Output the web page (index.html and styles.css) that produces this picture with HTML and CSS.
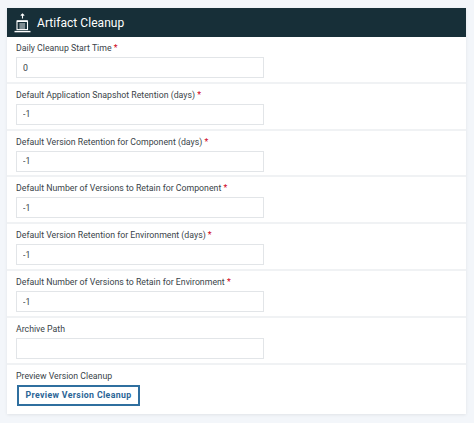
FILE: index.html
```html
<!DOCTYPE html>
<html lang="en">
<head>
    <meta charset="UTF-8">
    <title>Artifact Cleanup</title>
    <link rel="stylesheet" href="styles.css">
</head>
<body>
    <div class="panel">
        <div class="panel-header">
            <svg class="panel-icon" width="17" height="20" viewBox="0 0 17 20" fill="none" stroke="#ffffff" stroke-width="1.1">
                <path d="M8.5 1V5.5M6.8 2.7L8.5 1L10.2 2.7" />
                <rect x="3" y="8" width="10.5" height="8.6" />
                <path d="M3 8.2H13.5" stroke-width="1.6" />
                <path d="M5.4 11H11.1M5.4 13H11.1M5.4 15H11.1" stroke-width="0.9" />
                <path d="M0.5 18.6H16.5" stroke-width="1.4" />
            </svg>
            <span>Artifact Cleanup</span>
        </div>

        <div class="field">
            <label>Daily Cleanup Start Time <span class="req">*</span></label>
            <input type="text" value="0">
        </div>
        <div class="field">
            <label>Default Application Snapshot Retention (days) <span class="req">*</span></label>
            <input type="text" value="-1">
        </div>
        <div class="field">
            <label>Default Version Retention for Component (days) <span class="req">*</span></label>
            <input type="text" value="-1">
        </div>
        <div class="field">
            <label>Default Number of Versions to Retain for Component <span class="req">*</span></label>
            <input type="text" value="-1">
        </div>
        <div class="field">
            <label>Default Version Retention for Environment (days) <span class="req">*</span></label>
            <input type="text" value="-1">
        </div>
        <div class="field">
            <label>Default Number of Versions to Retain for Environment <span class="req">*</span></label>
            <input type="text" value="-1">
        </div>
        <div class="field">
            <label>Archive Path</label>
            <input type="text" value="">
        </div>
        <div class="field field-last">
            <label>Preview Version Cleanup</label>
            <button type="button">Preview Version Cleanup</button>
        </div>
    </div>
</body>
</html>
```

FILE: styles.css
```css
body {
    margin: 0;
    padding: 8px 8px 8px 7px;
    background: #f3f6fa;
    font-family: Roboto, 'Liberation Sans', sans-serif;
    font-size: 8.75px;
    color: #3a4449;
}

.panel {
    background: #ffffff;
    box-shadow: 0 1px 3px rgba(0,0,0,0.08);
}

.panel-header {
    display: flex;
    align-items: center;
    gap: 6px;
    height: 29px;
    padding-left: 7px;
    background: #172f38;
    color: #ffffff;
    font-size: 12px;
    letter-spacing: 0.05px;
}

.field {
    display: flex;
    flex-direction: column;
    align-items: flex-start;
    height: 46.83px;
    box-sizing: border-box;
    padding: 5px 0 0 9px;
    border-bottom: 2px solid #f0f2f4;
}

.field label {
    height: 15px;
    line-height: 13px;
}

.req {
    color: #d0021b;
}

.field input {
    width: 248px;
    height: 21px;
    box-sizing: border-box;
    padding: 0 6px;
    border: 1px solid #e2e5e8;
    background: #ffffff;
    font: inherit;
    color: inherit;
}

.field-last {
    border-bottom: none;
    height: 49px;
    padding-top: 5px;
}

.field-last button {
    margin: 0 0 0 1px;
    width: 123px;
    height: 21px;
    padding: 0;
    border: 2px solid #2f6f9f;
    background: #ffffff;
    color: #2a6496;
    font: inherit;
    font-weight: 700;
    letter-spacing: 0.35px;
    white-space: nowrap;
}
```
